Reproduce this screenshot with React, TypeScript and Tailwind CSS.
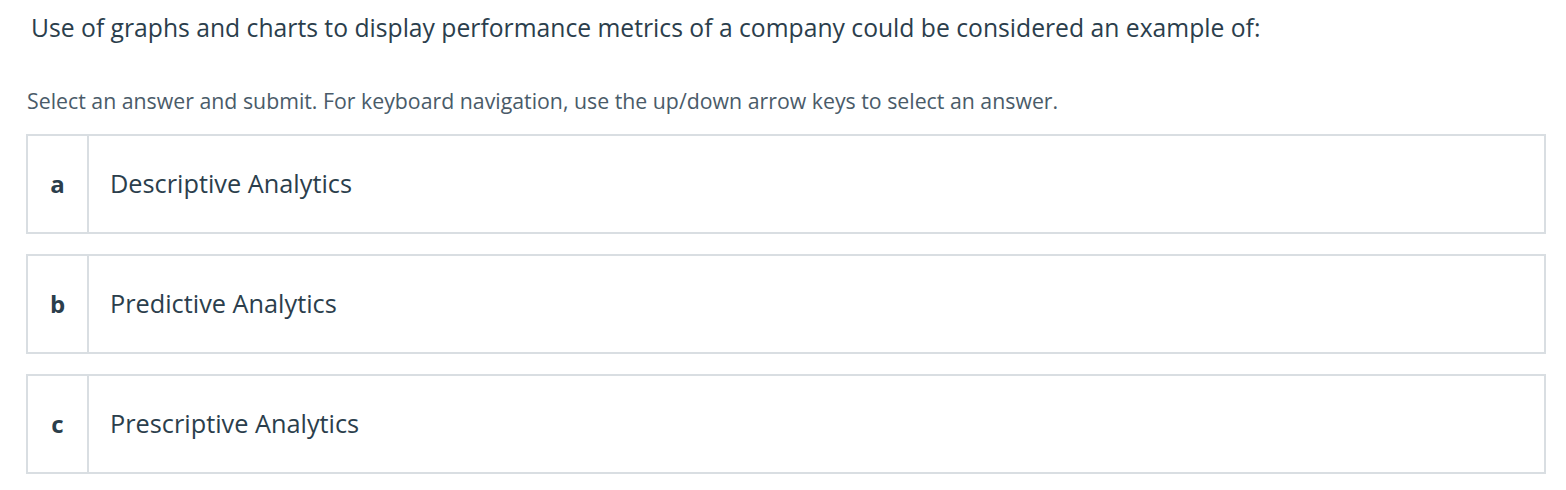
import React from 'react'

const options = [
  { key: 'a', label: 'Descriptive Analytics' },
  { key: 'b', label: 'Predictive Analytics' },
  { key: 'c', label: 'Prescriptive Analytics' },
]

export default function App() {
  return (
    <div className="w-[1566px] h-[490px] bg-white pl-[26px] pr-[20px] font-['Open_Sans','Liberation_Sans',sans-serif]">
      <h1 className="pt-[12px] pl-[5px] text-[24.7px] leading-[32px] text-[#2b3e4c] font-normal">
        Use of graphs and charts to display performance metrics of a company could be considered an example of:
      </h1>
      <p className="mt-[44px] pl-[1px] text-[21.3px] leading-[26px] text-[#4a5b69]">
        Select an answer and submit. For keyboard navigation, use the up/down arrow keys to select an answer.
      </p>
      <div className="mt-[20px] flex flex-col gap-[20px]">
        {options.map((o) => (
          <div key={o.key} className="flex h-[100px] border-2 border-[#d9dee2]">
            <div className="w-[61px] flex items-center justify-center border-r-2 border-[#d9dee2] text-[24px] font-bold text-[#2b3e4c]">
              {o.key}
            </div>
            <div className="flex items-center pl-[21px] text-[25.3px] text-[#2b3e4c]">{o.label}</div>
          </div>
        ))}
      </div>
    </div>
  )
}
